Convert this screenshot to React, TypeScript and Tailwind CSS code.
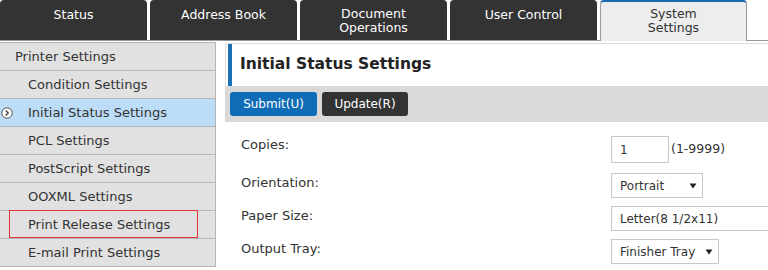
import React from "react";

const tabs = [
  { label: ["Status"] },
  { label: ["Address Book"] },
  { label: ["Document", "Operations"] },
  { label: ["User Control"] },
  { label: ["System", "Settings"], active: true },
];

const side = [
  { t: "Printer Settings", top: true },
  { t: "Condition Settings" },
  { t: "Initial Status Settings", sel: true },
  { t: "PCL Settings" },
  { t: "PostScript Settings" },
  { t: "OOXML Settings" },
  { t: "Print Release Settings", boxed: true },
  { t: "E-mail Print Settings" },
];

function Caret() {
  return (
    <svg width="8" height="6" viewBox="0 0 8 6">
      <path d="M0.5 0.5 L7.5 0.5 L4 5.5 Z" fill="#222" />
    </svg>
  );
}

export default function App() {
  return (
    <div
      className="w-[768px] h-[270px] overflow-hidden bg-white text-[#333]"
      style={{ fontFamily: '"DejaVu Sans", Verdana, sans-serif' }}
    >
      {/* tab bar */}
      <div className="flex h-[41px] gap-[3px] border-b border-[#9a9a9a]">
        {tabs.map((tab, i) =>
          tab.active ? (
            <div
              key={i}
              className="w-[147px] h-[41px] rounded-t-[4px] bg-[#ededed] border-t-2 border-x border-[#9a9a9a] border-t-[#1b6db3] flex flex-col items-center pt-[5px] text-[12.5px] leading-[14px] text-[#333]"
            >
              {tab.label.map((l) => (
                <span key={l}>{l}</span>
              ))}
            </div>
          ) : (
            <div
              key={i}
              className={`w-[147px] h-[40px] rounded-t-[4px] bg-[#333333] flex flex-col items-center text-[12.5px] leading-[14px] text-white ${
                tab.label.length > 1 ? "pt-[7px]" : "pt-[8px]"
              }`}
            >
              {tab.label.map((l) => (
                <span key={l}>{l}</span>
              ))}
            </div>
          )
        )}
      </div>

      <div className="flex pt-[1px]">
        {/* sidebar */}
        <div className="w-[216px] shrink-0 bg-[#e1e1e1] border-t border-r border-[#b5b5b5]">
          {side.map((s, i) => (
            <div
              key={i}
              className={`relative h-[28px] flex items-center border-b border-[#b5b5b5] text-[13px] ${
                s.sel ? "bg-[#bcdcf7]" : ""
              } ${s.top ? "pl-[15px]" : "pl-[28px]"}`}
            >
              {s.sel && (
                <svg
                  className="absolute left-[1px] top-[8px]"
                  width="12"
                  height="12"
                  viewBox="0 0 12 12"
                >
                  <circle cx="6" cy="6" r="5.2" fill="#fff" stroke="#555" strokeWidth="1" />
                  <path d="M4.7 3.5 L7.2 6 L4.7 8.5" fill="none" stroke="#444" strokeWidth="1.4" />
                </svg>
              )}
              <span className="relative">{s.t}</span>
              {s.boxed && (
                <div className="absolute z-10 left-[9px] top-[-1px] w-[189px] h-[28px] border border-[#e2333b]" />
              )}
            </div>
          ))}
        </div>

        {/* main */}
        <div className="flex-1 ml-[9px] pt-[1px]">
          <div className="h-[43px] border-l border-t border-[#dcdcdc] pl-[2px] flex">
            <div className="w-[4px] bg-[#1a6fb5]" />
            <div className="flex items-center pl-[8px] text-[15.5px] font-bold text-[#222]">
              Initial Status Settings
            </div>
          </div>
          <div className="h-[36px] bg-[#d9d9d9] flex items-center gap-[5px] pl-[5px]">
            <button className="w-[87px] h-[24px] rounded-[3px] bg-[#0e6db6] text-white text-[12px]">
              Submit(U)
            </button>
            <button className="w-[86px] h-[24px] rounded-[3px] bg-[#333333] text-white text-[12px]">
              Update(R)
            </button>
          </div>

          <div className="text-[13px] pt-[14px]">
            <div className="flex items-center h-[27px]">
              <div className="w-[386px] pl-[16px] -mt-[9px]">Copies:</div>
              <div className="w-[58px] h-[27px] border border-[#c8c8c8] flex items-center pl-[8px] text-[12px]">
                1
              </div>
              <span className="pl-[2px] text-[12.5px]">(1-9999)</span>
            </div>
            <div className="flex items-center h-[25px] mt-[10px]">
              <div className="w-[386px] pl-[16px] -mt-[6px]">Orientation:</div>
              <div className="w-[92px] h-[25px] border border-[#c8c8c8] flex items-center justify-between pl-[8px] pr-[5px] text-[12px]">
                <span>Portrait</span>
                <Caret />
              </div>
            </div>
            <div className="flex items-center h-[25px] mt-[8px]">
              <div className="w-[386px] pl-[16px] -mt-[6px]">Paper Size:</div>
              <div className="w-[170px] h-[25px] border border-[#c8c8c8] flex items-center pl-[8px] text-[12px]">
                Letter(8 1/2x11)
              </div>
            </div>
            <div className="flex items-center h-[25px] mt-[8px]">
              <div className="w-[386px] pl-[16px] -mt-[6px]">Output Tray:</div>
              <div className="w-[108px] h-[25px] border border-[#c8c8c8] flex items-center justify-between pl-[8px] pr-[5px] text-[12px]">
                <span>Finisher Tray</span>
                <Caret />
              </div>
            </div>
          </div>
        </div>
      </div>
    </div>
  );
}
